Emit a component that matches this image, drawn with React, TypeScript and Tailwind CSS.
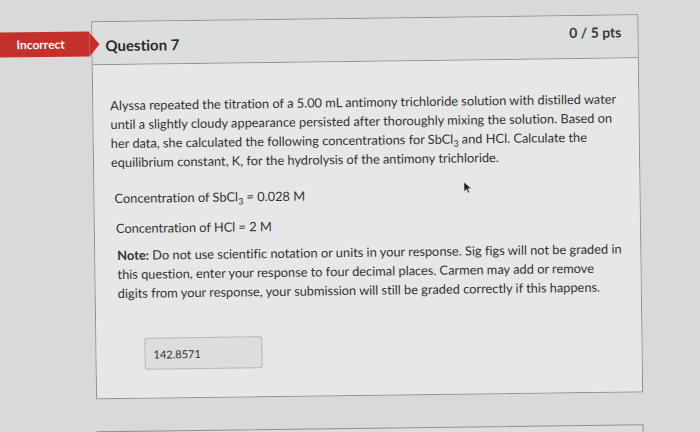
import React from 'react';

function Cursor() {
  return (
    <svg
      className="absolute left-[463px] top-[181px]"
      width="10"
      height="13"
      viewBox="0 0 10 13"
    >
      <path d="M1 1 L1 10.5 L3.4 8.4 L5.2 12 L6.6 11.3 L4.9 7.8 L8.3 7.6 Z" fill="#1c1c1c" stroke="#e6e6e6" strokeWidth="0.6" />
    </svg>
  );
}

function Sub({ children }: { children: React.ReactNode }) {
  return <span className="relative top-[3px] text-[9px] leading-none">{children}</span>;
}

export default function App() {
  return (
    <div
      className="relative w-[700px] h-[432px] overflow-hidden bg-[#d8dada] text-[#333] [font-variant-ligatures:none]"
      style={{ fontFamily: 'Lato, "Open Sans", sans-serif' }}
    >
      <div className="-rotate-[0.75deg] pt-[18px]">
        <div className="relative ml-[94px] w-[547px]">
          {/* Incorrect tag */}
          <div className="absolute -left-[94px] top-[10px] flex items-center">
            <div className="h-[25px] w-[92px] bg-[#c4302b] flex items-center pl-[19px] text-white text-[12px] font-bold">
              Incorrect
            </div>
            <div className="w-0 h-0 border-y-[12.5px] border-y-transparent border-l-[10px] border-l-[#c4302b]" />
          </div>

          <div className="border border-[#8e9090]">
            {/* Header */}
            <div className="h-[43px] bg-[#dcdedd] border-b border-[#8e9090] flex items-start justify-between pl-[13px] pr-[16px]">
              <div className="mt-[12px] text-[15px] font-bold text-[#2a2a2a]">Question 7</div>
              <div className="mt-[6px] text-[14px] font-bold text-[#3a3a3a]">0 / 5 pts</div>
            </div>

            {/* Body */}
            <div className="bg-[#e6e7e6] h-[333px] pl-[17px] pr-[20px] pt-[31px] text-[12.8px] leading-[19px] whitespace-nowrap">
              <p>
                Alyssa repeated the titration of a 5.00 mL antimony trichloride solution with distilled water
                <br />
                until a slightly cloudy appearance persisted after thoroughly mixing the solution. Based on
                <br />
                her data, she calculated the following concentrations for SbCl<Sub>3</Sub> and HCl. Calculate the
                <br />
                equilibrium constant, K, for the hydrolysis of the antimony trichloride.
              </p>
              <p className="mt-[17px] pl-[3px]">
                Concentration of SbCl<Sub>3</Sub> = 0.028 M
              </p>
              <p className="mt-[11px] pl-[4px]">Concentration of HCl = 2 M</p>
              <p className="mt-[8px] pl-[5px]">
                <span className="font-bold">Note:</span> Do not use scientific notation or units in your response. Sig figs will not be graded in
                <br />
                this question, enter your response to four decimal places. Carmen may add or remove
                <br />
                digits from your response, your submission will still be graded correctly if this happens.
              </p>
              <div className="mt-[35px] ml-[31px] w-[118px] h-[32px] rounded-[3px] border border-[#b5b7b7] bg-[#dcdddc] flex items-center pl-[8px] text-[11px] text-[#333]">
                142.8571
              </div>
            </div>
          </div>

          <div className="mt-[32px] h-[40px] border border-[#8e9090] bg-[#dcdedd]" />
        </div>
      </div>
      <Cursor />
    </div>
  );
}
